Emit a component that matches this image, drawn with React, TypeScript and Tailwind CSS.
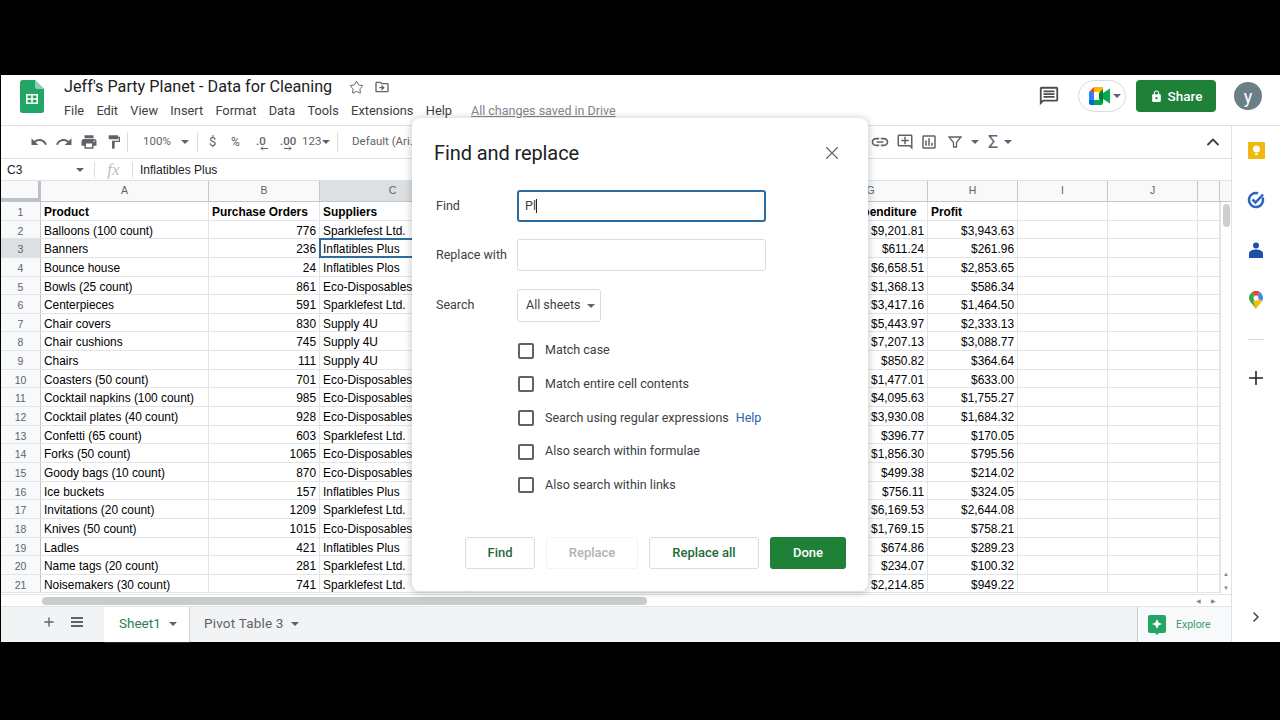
import { Star, X, Plus, ChevronUp, ChevronRight } from 'lucide-react';
import {
  MdUndo,
  MdRedo,
  MdPrint,
  MdFormatPaint,
  MdLink,
  MdLock,
  MdOutlineAddComment,
  MdOutlineAssessment,
  MdOutlineDriveFileMove,
  MdOutlineComment,
} from 'react-icons/md';

const rows: [string, string, string, string, string][] = [
  ['Balloons (100 count)', '776', 'Sparklefest Ltd.', '$9,201.81', '$3,943.63'],
  ['Banners', '236', 'Inflatibles Plus', '$611.24', '$261.96'],
  ['Bounce house', '24', 'Inflatibles Plos', '$6,658.51', '$2,853.65'],
  ['Bowls (25 count)', '861', 'Eco-Disposables', '$1,368.13', '$586.34'],
  ['Centerpieces', '591', 'Sparklefest Ltd.', '$3,417.16', '$1,464.50'],
  ['Chair covers', '830', 'Supply 4U', '$5,443.97', '$2,333.13'],
  ['Chair cushions', '745', 'Supply 4U', '$7,207.13', '$3,088.77'],
  ['Chairs', '111', 'Supply 4U', '$850.82', '$364.64'],
  ['Coasters (50 count)', '701', 'Eco-Disposables', '$1,477.01', '$633.00'],
  ['Cocktail napkins (100 count)', '985', 'Eco-Disposables', '$4,095.63', '$1,755.27'],
  ['Cocktail plates (40 count)', '928', 'Eco-Disposables', '$3,930.08', '$1,684.32'],
  ['Confetti (65 count)', '603', 'Sparklefest Ltd.', '$396.77', '$170.05'],
  ['Forks (50 count)', '1065', 'Eco-Disposables', '$1,856.30', '$795.56'],
  ['Goody bags (10 count)', '870', 'Eco-Disposables', '$499.38', '$214.02'],
  ['Ice buckets', '157', 'Inflatibles Plus', '$756.11', '$324.05'],
  ['Invitations (20 count)', '1209', 'Sparklefest Ltd.', '$6,169.53', '$2,644.08'],
  ['Knives (50 count)', '1015', 'Eco-Disposables', '$1,769.15', '$758.21'],
  ['Ladles', '421', 'Inflatibles Plus', '$674.86', '$289.23'],
  ['Name tags (20 count)', '281', 'Sparklefest Ltd.', '$234.07', '$100.32'],
  ['Noisemakers (30 count)', '741', 'Sparklefest Ltd.', '$2,214.85', '$949.22'],
];

const menus = ['File', 'Edit', 'View', 'Insert', 'Format', 'Data', 'Tools', 'Extensions', 'Help'];
const options = [
  'Match case',
  'Match entire cell contents',
  'Search using regular expressions',
  'Also search within formulae',
  'Also search within links',
];

const cell = 'h-full shrink-0 border-r border-[#e3e4e5] px-[3px] overflow-hidden whitespace-nowrap';

function Caret({ className = '' }: { className?: string }) {
  return <span className={`inline-block w-0 h-0 border-x-[4px] border-x-transparent border-t-[4px] border-t-[#5f6368] ${className}`} />;
}

function Divider() {
  return <div className="w-px h-[20px] bg-[#dadce0] shrink-0" />;
}

// small arrow under the .0 and .00 toolbar buttons
function DecimalArrow({ left }: { left: boolean }) {
  return (
    <svg className="absolute left-[4px] top-[13px]" width="8" height="5" viewBox="0 0 8 5" fill="none" stroke="#5f6368" strokeWidth="1">
      {left ? <path d="M8 2.500H1M3 .5L1 2.500 3 4.500" /> : <path d="M0 2.500h7M5 .5l2 2-2 2" />}
    </svg>
  );
}

function SheetsLogo() {
  return (
    <svg width="24" height="33" viewBox="0 0 24 33">
      <path d="M2.500 0H15l9 9v21.500a2.500 2.500 0 0 1-2.500 2.500h-19A2.500 2.500 0 0 1 0 30.500V2.500A2.500 2.500 0 0 1 2.500 0z" fill="#23a566" />
      <path d="M15 0l9 9h-6.500A2.500 2.500 0 0 1 15 6.500z" fill="#8ed1b1" />
      <path d="M6 14h12v10H6zm1.600 1.600v2.600h3.600v-2.600zm5.200 0v2.600h3.600v-2.600zm-5.200 4.200v2.600h3.600v-2.600zm5.200 0v2.600h3.600v-2.600z" fill="#fff" fillRule="evenodd" />
    </svg>
  );
}

function MeetLogo() {
  return (
    <svg width="22" height="18" viewBox="0 0 22 18">
      <path d="M5 0h9v5H5z" fill="#fbbc04" />
      <path d="M5 0v5H0z" fill="#ea4335" />
      <path d="M0 5h5v8H0z" fill="#2684fc" />
      <path d="M0 13h5v5H2a2 2 0 0 1-2-2z" fill="#0066da" />
      <path d="M5 13h9v3a2 2 0 0 1-2 2H5z" fill="#00ac47" />
      <path d="M14 2v14l-4-4V6z" fill="#00832d" />
      <path d="M14 6l7-4.500v15L14 12z" fill="#00ac47" />
    </svg>
  );
}

export default function App() {
  return (
    <div className="w-[1280px] h-[720px] bg-black pt-[75px] pb-[78px] flex flex-col font-['Liberation_Sans',sans-serif] overflow-hidden">
      <div className="relative flex-1 min-h-0 bg-white flex flex-col ml-px">
        {/* Header */}
        <header className="h-[51px] shrink-0 flex border-b border-[#dfe1e3]">
          <div className="w-[63px] shrink-0 pt-[5px] pl-[19px]">
            <SheetsLogo />
          </div>
          <div className="flex-1 font-['Roboto',sans-serif]">
            <div className="flex items-center h-[24px]">
              <span className="text-[16.200px] text-[#202124]">Jeff's Party Planet - Data for Cleaning</span>
              <Star className="w-[15px] h-[15px] ml-[17px] text-[#5f6368]" strokeWidth={1.6} />
              <MdOutlineDriveFileMove className="w-[16px] h-[16px] ml-[10px] text-[#5f6368]" />
            </div>
            <div className="flex items-center h-[20px] mt-[2px] text-[12.800px] text-[#3c4043]">
              <div className="flex gap-[12.300px]">
                {menus.map((m) => (
                  <span key={m}>{m}</span>
                ))}
              </div>
              <span className="ml-[19px] text-[12.500px] text-[#80868b] underline">All changes saved in Drive</span>
            </div>
          </div>
          <div className="flex items-center shrink-0 pb-[8px] pr-[18px]">
            <MdOutlineComment className="w-[22px] h-[22px] text-[#4a4d50] scale-x-[-1] mr-[18px]" />
            <div className="w-[48px] h-[32px] rounded-full border border-[#dadce0] flex items-center pl-[10px] gap-[2px] mr-[10px]">
              <MeetLogo />
              <Caret />
            </div>
            <button className="w-[80px] h-[32px] rounded-[4px] bg-[#1e8137] text-white text-[13.500px] font-medium font-['Roboto',sans-serif] flex items-center justify-center gap-[5px] mr-[18px]">
              <MdLock className="w-[13px] h-[13px]" />
              Share
            </button>
            <div className="w-[28px] h-[28px] rounded-full bg-[#6b7f88] text-white text-[18px] font-['Roboto',sans-serif] flex items-center justify-center">y</div>
          </div>
        </header>

        <div className="flex-1 min-h-0 flex">
          <main className="w-[1230px] shrink-0 flex flex-col">
            {/* Toolbar */}
            <div className="h-[33px] shrink-0 flex items-center pl-[29px] border-b border-[#dfe1e3] text-[#5f6368] font-['Roboto',sans-serif] text-[11.500px]">
              <MdUndo className="w-[18px] h-[18px] mr-[7px]" />
              <MdRedo className="w-[18px] h-[18px] mr-[7px]" />
              <MdPrint className="w-[18px] h-[18px] mr-[8px]" />
              <MdFormatPaint className="w-[16px] h-[16px] mr-[5px]" />
              <Divider />
              <span className="ml-[15px] w-[38px]">100%</span>
              <Caret className="mr-[8px]" />
              <Divider />
              <span className="ml-[11px] w-[22px] text-[13px]">$</span>
              <span className="w-[25px] text-[12px]">%</span>
              <span className="relative w-[24px] font-medium">
                .0
                <DecimalArrow left />
              </span>
              <span className="relative w-[22px] font-medium">
                .00
                <DecimalArrow left={false} />
              </span>
              <span className="w-[20px]">123</span>
              <Caret className="mr-[7px]" />
              <Divider />
              <span className="ml-[14px] w-[518px] whitespace-nowrap">Default (Ari..</span>
              <div className="flex items-center">
                <MdLink className="w-[20px] h-[20px] mr-[6px]" />
                <MdOutlineAddComment className="w-[18px] h-[18px] mr-[6px]" />
                <MdOutlineAssessment className="w-[18px] h-[18px] mr-[10px]" />
                <svg width="14" height="14" viewBox="0 0 14 14" fill="none" stroke="currentColor" strokeWidth="1.300">
                  <path d="M1 2h12L8.500 7.500V12h-3V7.500z" />
                </svg>
                <Caret className="ml-[9px]" />
                <span className="ml-[9px] text-[18px] leading-none">Σ</span>
                <Caret className="ml-[6px]" />
                <ChevronUp className="w-[20px] h-[20px] ml-[191px] text-[#3c4043]" strokeWidth={2.200} />
              </div>
            </div>

            {/* Formula bar */}
            <div className="h-[22px] shrink-0 flex items-center text-[12px] text-[#202124] border-b border-[#dfe1e3]">
              <span className="w-[75px] pl-[6px]">C3</span>
              <Caret />
              <div className="w-[7px]" />
              <div className="w-px h-[16px] bg-[#dadce0] ml-[3px]" />
              <span className="w-[37px] text-center text-[#bdc1c6] font-['Liberation_Serif',serif] italic text-[17px]">fx</span>
              <div className="w-px h-[16px] bg-[#dadce0]" />
              <span className="ml-[7px]">Inflatibles Plus</span>
            </div>

            {/* Grid */}
            <div className="flex-1 min-h-0 flex flex-col text-[11.900px] text-black">
              <div className="h-[21px] shrink-0 flex bg-[#f8f9fa] text-[10.500px] text-[#5f6368] text-center leading-[19px] border-b border-[#c4c7c9]">
                <div className="w-[40px] shrink-0 border-r-[3px] border-b-[3px] border-[#bdc1c6]" />
                <div className="w-[168px] shrink-0 border-r border-[#c4c7c9]">A</div>
                <div className="w-[111px] shrink-0 border-r border-[#c4c7c9]">B</div>
                <div className="w-[146px] shrink-0 bg-[#dde0e2] border-r border-[#c4c7c9]">C</div>
                <div className="w-[348px] shrink-0" />
                <div className="w-[114px] shrink-0 border-r border-[#c4c7c9]">G</div>
                <div className="w-[90px] shrink-0 border-r border-[#c4c7c9]">H</div>
                <div className="w-[90px] shrink-0 border-r border-[#c4c7c9]">I</div>
                <div className="w-[90px] shrink-0 border-r border-[#c4c7c9]">J</div>
                <div className="w-[22px] shrink-0 border-r border-[#c4c7c9]" />
              </div>

              <div className="flex-1 min-h-0 relative overflow-hidden">
                <div className="h-[18.650px] flex border-b border-[#e3e4e5] leading-[20px] font-bold">
                  <div className="w-[40px] shrink-0 bg-[#f8f9fa] border-r border-[#c4c7c9] text-center text-[10.500px] font-normal text-[#5f6368]">1</div>
                  <div className={`${cell} w-[168px]`}>Product</div>
                  <div className={`${cell} w-[111px]`}>Purchase Orders</div>
                  <div className={`${cell} w-[146px]`}>Suppliers</div>
                  <div className="w-[348px] shrink-0" />
                  <div className={`${cell} w-[114px]`}>Total Expenditure</div>
                  <div className={`${cell} w-[90px]`}>Profit</div>
                  <div className={`${cell} w-[90px]`} />
                  <div className={`${cell} w-[90px]`} />
                  <div className={`${cell} w-[22px]`} />
                </div>
                {rows.map((r, i) => (
                  <div key={r[0]} className="h-[18.650px] flex border-b border-[#e3e4e5] leading-[20px]">
                    <div className={`w-[40px] shrink-0 border-r border-[#c4c7c9] text-center text-[10.500px] text-[#5f6368] ${i === 1 ? 'bg-[#dde0e2]' : 'bg-[#f8f9fa]'}`}>
                      {i + 2}
                    </div>
                    <div className={`${cell} w-[168px]`}>{r[0]}</div>
                    <div className={`${cell} w-[111px] text-right`}>{r[1]}</div>
                    <div className={`${cell} w-[146px] ${i === 1 ? 'outline-2 -outline-offset-1 outline-[#2b6ca3]' : ''}`}>{r[2]}</div>
                    <div className="w-[348px] shrink-0" />
                    <div className={`${cell} w-[114px] text-right`}>{r[3]}</div>
                    <div className={`${cell} w-[90px] text-right`}>{r[4]}</div>
                    <div className={`${cell} w-[90px]`} />
                    <div className={`${cell} w-[90px]`} />
                    <div className={`${cell} w-[22px]`} />
                  </div>
                ))}
                {/* Vertical scrollbar */}
                <div className="absolute right-0 top-0 bottom-0 w-[11px] bg-white border-l border-[#e3e4e5]">
                  <div className="mt-[2px] mx-auto w-[7px] h-[23px] rounded-full bg-[#ccced0]" />
                  <div className="absolute bottom-[15px] left-[2px] text-[6px] text-[#80868b]">▲</div>
                  <div className="absolute bottom-[1px] left-[2px] text-[6px] text-[#80868b]">▼</div>
                </div>
              </div>

              {/* Horizontal scrollbar */}
              <div className="h-[12px] shrink-0 flex items-center pl-[41px] border-t border-[#e3e4e5] relative">
                <div className="w-[605px] h-[8px] rounded-full bg-[#c9cccd]" />
                <div className="absolute right-[15px] top-[2px] flex gap-[10px] text-[6px] text-[#80868b]">
                  <span>◀</span>
                  <span>▶</span>
                </div>
              </div>
            </div>

            {/* Tabs */}
            <div className="h-[36px] shrink-0 flex bg-[#f1f3f4] border-t border-[#e3e4e5] font-['Roboto',sans-serif] text-[13.500px] tracking-[0.2px] text-[#5f6368]">
              <Plus className="w-[14px] h-[14px] ml-[41px] mt-[8px] text-[#5f6368]" strokeWidth={2.400} />
              <div className="ml-[15px] mt-[10px] w-[12px] h-[10px] flex flex-col justify-between">
                <div className="h-[2px] bg-[#5f6368]" />
                <div className="h-[2px] bg-[#5f6368]" />
                <div className="h-[2px] bg-[#5f6368]" />
              </div>
              <div className="ml-[21px] w-[85px] bg-white flex items-center gap-[8px] pl-[15px] pb-[2px] tracking-normal text-[#2e7d4f] shadow-[1px_0_1px_#d5d7d9]">
                Sheet1
                <Caret />
              </div>
              <div className="ml-[15px] flex items-center gap-[7px] pb-[2px]">
                Pivot Table 3
                <Caret />
              </div>
              <div className="ml-auto w-[94px] bg-[#f8f9fa] border-l border-[#c8cacc] flex items-center pl-[10px] gap-[10px] text-[10.500px] tracking-normal text-[#3b9c69]">
                <svg width="18" height="20" viewBox="0 0 18 20">
                  <path d="M2 0h14a2 2 0 0 1 2 2v14a2 2 0 0 1-2 2h-5l-2 2-2-2H2a2 2 0 0 1-2-2V2a2 2 0 0 1 2-2z" fill="#23a566" />
                  <path d="M9 4l1.500 3.500L14 9l-3.500 1.500L9 14l-1.500-3.500L4 9l3.500-1.500z" fill="#fff" />
                </svg>
                Explore
              </div>
            </div>
          </main>

          {/* Side panel */}
          <aside className="flex-1 border-l border-[#dfe1e3] flex flex-col items-center">
            <div className="mt-[16px] w-[17px] h-[17px] bg-[#f0b90f] rounded-[1px] flex items-center justify-center">
              <svg width="9" height="11" viewBox="0 0 9 11">
                <circle cx="4.500" cy="4" r="3.500" fill="#fff" />
                <path d="M3 8.500h3V10H3z" fill="#fff" />
              </svg>
            </div>
            <svg className="mt-[32px]" width="18" height="18" viewBox="0 0 18 18" fill="none">
              <path d="M15.500 6.500A7 7 0 1 1 11 2.300" stroke="#2f64c0" strokeWidth="2.500" />
              <path d="M5.500 8.500L8.500 11.500L16 3.500" stroke="#2f64c0" strokeWidth="2.500" />
            </svg>
            <svg className="mt-[33px]" width="14" height="16" viewBox="0 0 14 16">
              <circle cx="7" cy="3.500" r="3" fill="#1f4fa8" />
              <path d="M0 11.500C0 8.500 4 7.500 7 7.500s7 1 7 4V16H0z" fill="#1f4fa8" />
            </svg>
            <svg className="mt-[33px]" width="14" height="18" viewBox="0 0 14 18">
              <path d="M7 18C5 14 0 11 0 7a7 7 0 0 1 3-5.700L7 7z" fill="#34a853" />
              <path d="M3 1.300A7 7 0 0 1 11 1L7 7z" fill="#ea4335" />
              <path d="M11 1a7 7 0 0 1 3 6c0 1-.3 2-.8 3L7 7z" fill="#4285f4" />
              <path d="M13.200 10C11.800 13 8.500 15 7 18L4 10l3-3z" fill="#fbbc04" />
              <circle cx="7" cy="7" r="2.500" fill="#fff" />
            </svg>
            <div className="mt-[30px] w-[16px] h-px bg-[#dadce0]" />
            <Plus className="mt-[27px] w-[22px] h-[22px] text-[#202124]" strokeWidth={1.700} />
            <ChevronRight className="mt-auto mb-[17px] w-[16px] h-[16px] text-[#3c4043]" strokeWidth={2.200} />
          </aside>
        </div>

        {/* Find and replace dialog */}
        <div className="absolute left-[411px] top-[43px] w-[456px] h-[473px] bg-white rounded-[8px] shadow-[0_1px_6px_2px_rgba(60,64,67,0.22)] font-['Roboto',sans-serif] text-[12.500px] text-[#3c4043]">
          <div className="flex items-center justify-between h-[25px] mt-[22px] pl-[22px] pr-[25px]">
            <h2 className="text-[20px] text-[#202124] tracking-[-0.1px]">Find and replace</h2>
            <X className="w-[22px] h-[22px] text-[#5f6368]" strokeWidth={1.200} />
          </div>
          <div className="flex items-center mt-[25px] pl-[24px]">
            <span className="w-[81px]">Find</span>
            <div className="w-[249px] h-[32px] rounded-[3px] border-2 border-[#2b6ca3] flex items-center pl-[6px] text-[#3c4043]">
              Pl
              <span className="w-px h-[14px] bg-[#202124]" />
            </div>
          </div>
          <div className="flex items-center mt-[17px] pl-[24px]">
            <span className="w-[81px]">Replace with</span>
            <div className="w-[249px] h-[32px] rounded-[3px] border border-[#dadce0]" />
          </div>
          <div className="flex items-center mt-[18px] pl-[24px]">
            <span className="w-[81px]">Search</span>
            <div className="w-[84px] h-[33px] rounded-[3px] border border-[#dadce0] flex items-center pl-[8px] gap-[7px]">
              All sheets
              <Caret />
            </div>
          </div>
          <div className="mt-[20.500px] pl-[106px] flex flex-col gap-[17.700px]">
            {options.map((o, i) => (
              <div key={o} className="h-[16px] flex items-center gap-[11px]">
                <div className="w-[16px] h-[16px] rounded-[2px] border-2 border-[#5f6368]" />
                {o}
                {i === 2 && <span className="ml-[-4px] text-[#2b62a8]">Help</span>}
              </div>
            ))}
          </div>
          <div className="absolute left-[53px] bottom-[22px] flex gap-[11px] text-[13px] font-medium">
            <button className="w-[70px] h-[32px] rounded-[3px] border border-[#dadce0] text-[#1e6b3a]">Find</button>
            <button className="w-[92px] h-[32px] rounded-[3px] text-[#b0b3b6] border border-[#f3f4f4]">Replace</button>
            <button className="w-[110px] h-[32px] rounded-[3px] border border-[#dadce0] text-[#1e6b3a]">Replace all</button>
            <button className="w-[76px] h-[32px] rounded-[3px] bg-[#1e8137] text-white">Done</button>
          </div>
        </div>
      </div>
    </div>
  );
}
